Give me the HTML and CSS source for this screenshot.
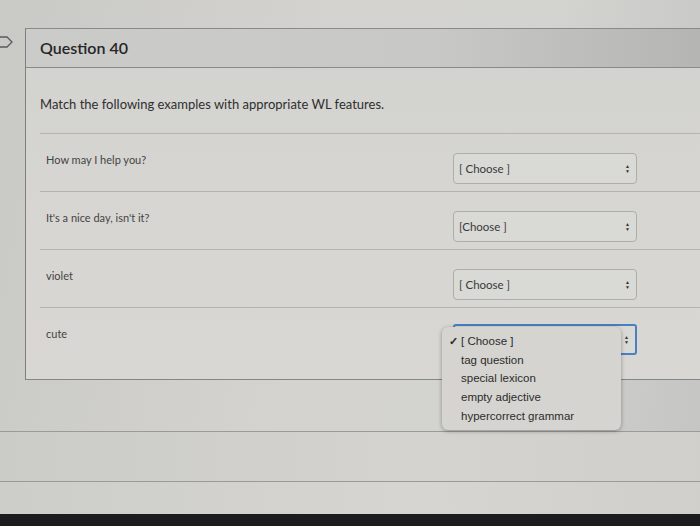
FILE: index.html
```html
<!DOCTYPE html>
<html>
<head>
<meta charset="utf-8">
<link rel="stylesheet" href="styles.css">
</head>
<body>
<div class="page">
  <div class="top">
    <div class="rail">
      <svg class="tab" width="14" height="14" viewBox="0 0 14 14"><path d="M-2 2 H7 L12 7 L7 12 H-2" fill="none" stroke="#5a5a5a" stroke-width="1.3"/></svg>
    </div>
    <div class="question">
      <div class="q-header">Question 40</div>
      <div class="q-body">
        <p class="prompt">Match the following examples with appropriate WL features.</p>
        <div class="row">
          <span class="label">How may I help you?</span>
          <div class="select"><span>[ Choose ]</span><span class="arrows">&#9650;<br>&#9660;</span></div>
        </div>
        <div class="row">
          <span class="label">It's a nice day, isn't it?</span>
          <div class="select"><span>[Choose ]</span><span class="arrows">&#9650;<br>&#9660;</span></div>
        </div>
        <div class="row">
          <span class="label">violet</span>
          <div class="select"><span>[ Choose ]</span><span class="arrows">&#9650;<br>&#9660;</span></div>
        </div>
        <div class="row last">
          <span class="label">cute</span>
          <div class="select focused"><span class="arrows">&#9650;<br>&#9660;</span>
            <ul class="menu">
              <li><span class="check">&#10003;</span>[ Choose ]</li>
              <li>tag question</li>
              <li>special lexicon</li>
              <li>empty adjective</li>
              <li>hypercorrect grammar</li>
            </ul>
          </div>
        </div>
      </div>
    </div>
  </div>
  <div class="band one"></div>
  <div class="band two"></div>
  <div class="bezel"></div>
</div>
</body>
</html>
```
FILE: styles.css
```css
html, body {
  margin: 0;
  padding: 0;
}
body {
  width: 700px;
  height: 526px;
  overflow: hidden;
  font-family: Lato, "Open Sans", sans-serif;
  background: linear-gradient(100deg, #c9c9c6 0%, #d4d3cf 45%, #d3d3d0 70%, #c4c4c2 100%);
}
.page {
  display: flex;
  flex-direction: column;
  height: 526px;
}
.top {
  display: flex;
  padding-top: 28px;
  height: 404px;
  box-sizing: border-box;
}
.rail {
  width: 25px;
  flex: none;
  padding-top: 7px;
}
.tab {
  display: block;
}
.question {
  flex: 1;
  border-top: 1px solid #8a8a88;
  border-left: 1px solid #7e7e7c;
  border-bottom: 1px solid #858583;
  height: 352px;
  box-sizing: border-box;
  background: linear-gradient(180deg, #d2d2cf 0%, #d7d6d3 60%, #d8d7d3 100%);
}
.q-header {
  height: 39px;
  box-sizing: border-box;
  padding: 9px 0 0 14px;
  font-size: 16px;
  font-weight: 600;
  color: #262626;
  background: linear-gradient(90deg, #cbcbc9 0%, #c8c8c6 60%, #b5b5b3 100%);
  border-bottom: 1px solid #8a8a88;
}
.q-body {
  padding-left: 14px;
}
.prompt {
  margin: 0;
  padding-top: 28px;
  height: 37px;
  font-size: 13px;
  color: #2f2f2f;
  border-bottom: 1px solid #b3b3b0;
}
.row {
  position: relative;
  height: 57px;
  border-bottom: 1px solid #b3b3b0;
  display: flex;
  justify-content: space-between;
  align-items: flex-start;
  padding-right: 63px;
}
.row.last {
  border-bottom: none;
}
.label {
  font-size: 11px;
  color: #444;
  padding-left: 6px;
  padding-top: 19px;
}
.select {
  position: relative;
  margin-top: 19px;
  width: 184px;
  height: 31px;
  box-sizing: border-box;
  border: 1px solid #adadab;
  border-radius: 4px;
  background: #d9d9d6;
  display: flex;
  justify-content: space-between;
  align-items: center;
  padding: 0 6px 0 5px;
  font-size: 11.5px;
  color: #3a3a3a;
}
.arrows {
  font-size: 5px;
  line-height: 5px;
  color: #333;
  text-align: center;
}
.select.focused {
  margin-top: 16px;
  border: 2px solid #4a7fc0;
  border-radius: 3px;
  justify-content: flex-end;
}
.menu {
  position: absolute;
  left: -13px;
  top: 1px;
  width: 179px;
  margin: 0;
  padding: 5px 0 5px 0;
  list-style: none;
  background: #d5d4d0;
  border-radius: 6px;
  box-shadow: 0 1px 4px rgba(0, 0, 0, 0.35);
  box-sizing: border-box;
  font-family: "Liberation Sans", Arial, sans-serif;
}
.menu li {
  height: 18.7px;
  line-height: 18.7px;
  padding-left: 19px;
  font-size: 11.5px;
  color: #2c2c2c;
  position: relative;
}
.check {
  position: absolute;
  left: 7px;
  font-size: 11px;
  font-weight: bold;
}
.band {
  flex: none;
  border-top: 1px solid #9a9a98;
}
.band.one {
  height: 49px;
  margin-top: 27px;
  background: linear-gradient(90deg, #cbcbc8, #d4d3cf 60%, #d0cfcc);
}
.band.two {
  height: 32px;
  background: linear-gradient(90deg, #cdcdca, #d6d5d1 60%, #d0cfcc);
}
.bezel {
  flex: 1;
  background: #1c1c1e;
}
```
